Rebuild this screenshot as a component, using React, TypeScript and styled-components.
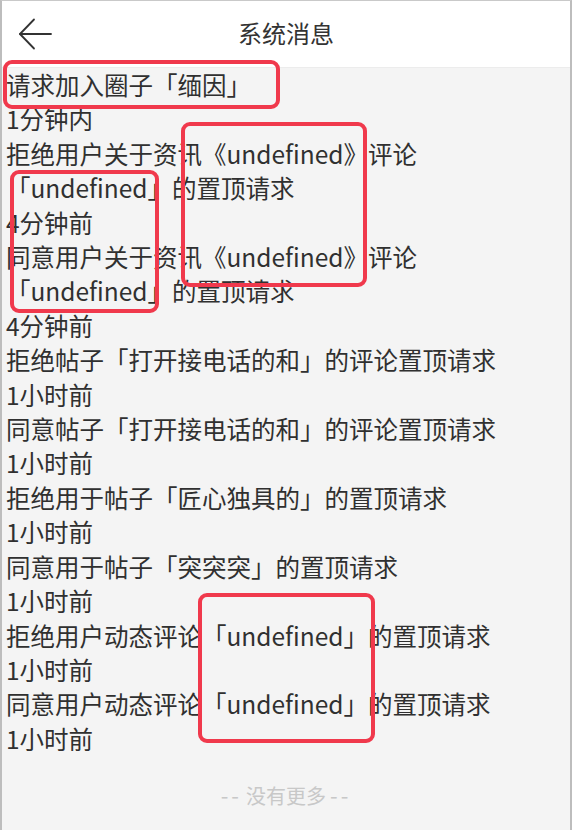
import styled, { createGlobalStyle } from "styled-components";

const GlobalStyle = createGlobalStyle`
	html, body {
		margin: 0;
		padding: 0;
		background: #f4f4f4;
	}
	* {
		box-sizing: border-box;
	}
`;

const Page = styled.div`
	position: relative;
	width: 572px;
	height: 830px;
	overflow: hidden;
	background: #f4f4f4;
	border-top: 1px solid #c9c9c9;
	border-left: 2px solid #bdbdbd;
	border-right: 2px solid #bdbdbd;
	font-family: "Noto Sans CJK SC", "Noto Sans", sans-serif;
	color: #333;
`;

const Header = styled.header`
	display: grid;
	grid-template-columns: 60px 1fr 60px;
	align-items: center;
	height: 67px;
	background: #fff;
	border-bottom: 1px solid #ececec;
`;

const BackButton = styled.button`
	display: flex;
	align-items: center;
	justify-content: center;
	padding: 0 0 0 6px;
	height: 100%;
	border: none;
	background: none;
	color: #333;
	cursor: pointer;
`;

const Title = styled.h1`
	margin: 0 0 2px;
	text-align: center;
	font-size: 24px;
	font-weight: 400;
	line-height: 1;
	color: #333;
`;

const List = styled.ul`
	list-style: none;
	margin: 0;
	padding: 0 12px 0 4px;
`;

const Item = styled.li`
	font-size: 24.5px;
	line-height: 34.4px;
	color: #303030;
`;

const Line = styled.div`
	white-space: normal;
`;

const Footer = styled.div`
	margin-top: 20px;
	text-align: center;
	font-size: 20px;
	line-height: 36px;
	color: #c8c8c8;
`;

const Dash = styled.span`
	display: inline-block;
	margin: 0 4px;
	letter-spacing: 3px;
	font-size: 22px;
`;

const Mark = styled.div<{ $x: number; $y: number; $w: number; $h: number }>`
	position: absolute;
	left: ${(p) => p.$x}px;
	top: ${(p) => p.$y}px;
	width: ${(p) => p.$w}px;
	height: ${(p) => p.$h}px;
	border: 4.5px solid #f0394c;
	border-radius: 9px;
	pointer-events: none;
`;

const messages = [
	{ text: "请求加入圈子「缅因」", time: "1分钟内" },
	{ text: "拒绝用户关于资讯《undefined》评论「undefined」的置顶请求", time: "4分钟前" },
	{ text: "同意用户关于资讯《undefined》评论「undefined」的置顶请求", time: "4分钟前" },
	{ text: "拒绝帖子「打开接电话的和」的评论置顶请求", time: "1小时前" },
	{ text: "同意帖子「打开接电话的和」的评论置顶请求", time: "1小时前" },
	{ text: "拒绝用于帖子「匠心独具的」的置顶请求", time: "1小时前" },
	{ text: "同意用于帖子「突突突」的置顶请求", time: "1小时前" },
	{ text: "拒绝用户动态评论「undefined」的置顶请求", time: "1小时前" },
	{ text: "同意用户动态评论「undefined」的置顶请求", time: "1小时前" },
];

// annotation boxes drawn over the screenshot (page coords)
const marks = [
	{ x: 1, y: 59, w: 277, h: 49 },
	{ x: 179, y: 121, w: 186, h: 165 },
	{ x: 8, y: 169, w: 149, h: 143 },
	{ x: 196, y: 592, w: 177, h: 150 },
];

const BackArrow = () => (
	<svg width="34" height="32" viewBox="0 0 34 32" fill="none" stroke="#333" strokeWidth="1.8" strokeLinecap="round" strokeLinejoin="round">
		<path d="M33 16H2" />
		<path d="M16 1.5L2 16l14 14.5" />
	</svg>
);

export default function App() {
	return (
		<>
			<GlobalStyle />
			<Page>
				<Header>
					<BackButton aria-label="返回">
						<BackArrow />
					</BackButton>
					<Title>系统消息</Title>
					<span />
				</Header>
				<List>
					{messages.map((m, i) => (
						<Item key={i}>
							<Line>{m.text}</Line>
							<Line>{m.time}</Line>
						</Item>
					))}
				</List>
				<Footer>
					<Dash>--</Dash>没有更多<Dash>--</Dash>
				</Footer>
				{marks.map((b, i) => (
					<Mark key={i} $x={b.x} $y={b.y} $w={b.w} $h={b.h} />
				))}
			</Page>
		</>
	);
}
